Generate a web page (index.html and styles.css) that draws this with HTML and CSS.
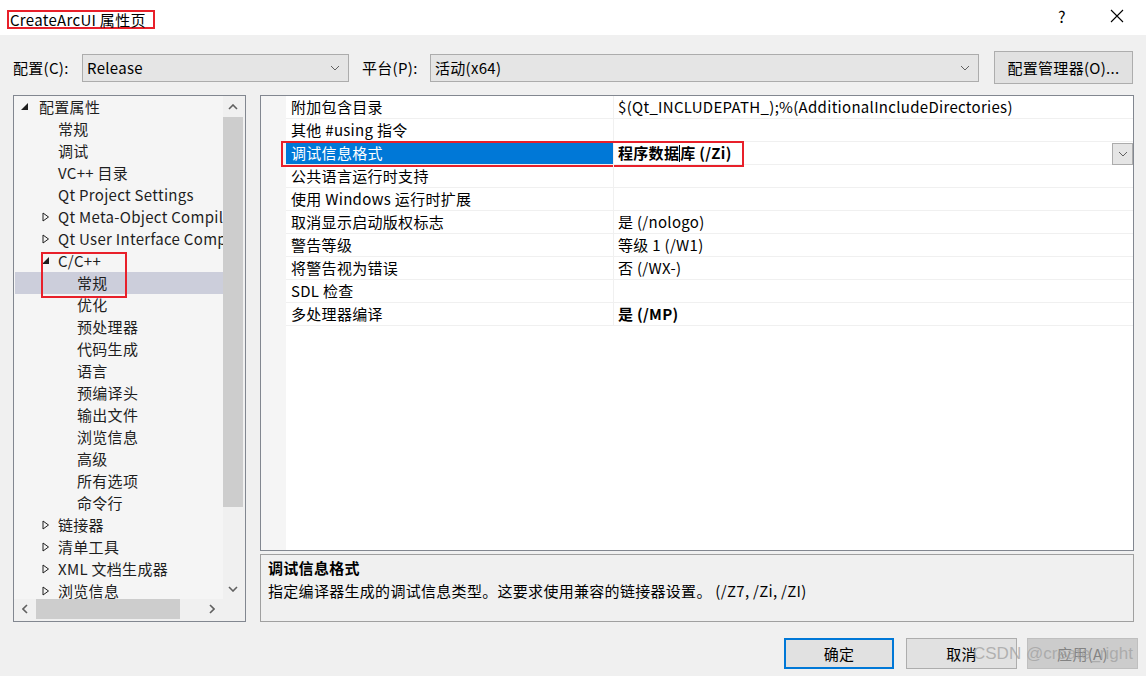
FILE: index.html
```html
<!DOCTYPE html>
<html lang="zh-CN">
<head>
    <meta charset="UTF-8">
    <title>CreateArcUI 属性页</title>
    <link rel="stylesheet" href="styles.css">
</head>
<body>
    <!-- Title bar -->
    <div class="titlebar">
        <span class="title-text mark">CreateArcUI 属性页</span>
        <div class="title-controls">
            <span class="help">?</span>
            <svg class="close" width="14" height="14" viewBox="0 0 14 14">
                <path d="M1 1 L13 13 M13 1 L1 13" stroke="#000" stroke-width="1.1" fill="none"/>
            </svg>
        </div>
    </div>

    <div class="dialog">
        <!-- Configuration row -->
        <div class="config-row">
            <label class="cfg-label">配置(C):</label>
            <div class="combo combo-config">
                <span>Release</span>
                <svg width="10" height="6" viewBox="0 0 10 6"><path d="M1 1 L5 5 L9 1" stroke="#606060" fill="none"/></svg>
            </div>
            <label class="cfg-label plat-label">平台(P):</label>
            <div class="combo combo-platform">
                <span>活动(x64)</span>
                <svg width="10" height="6" viewBox="0 0 10 6"><path d="M1 1 L5 5 L9 1" stroke="#606060" fill="none"/></svg>
            </div>
            <button class="btn btn-manager">配置管理器(O)...</button>
        </div>

        <div class="main">
            <!-- Tree -->
            <div class="tree">
                <div class="tree-content">
                    <div class="node lvl0"><span class="exp"><svg width="8" height="8" viewBox="0 0 8 8"><path d="M7 0 L7 7 L0 7 Z" fill="#1e1e1e"/></svg></span>配置属性</div>
                    <div class="node lvl1">常规</div>
                    <div class="node lvl1">调试</div>
                    <div class="node lvl1">VC++ 目录</div>
                    <div class="node lvl1">Qt Project Settings</div>
                    <div class="node lvl1"><span class="exp exp1"><svg width="8" height="10" viewBox="0 0 8 10"><path d="M1 1 L6.5 5 L1 9 Z" fill="none" stroke="#1e1e1e"/></svg></span>Qt Meta-Object Compiler</div>
                    <div class="node lvl1"><span class="exp exp1"><svg width="8" height="10" viewBox="0 0 8 10"><path d="M1 1 L6.5 5 L1 9 Z" fill="none" stroke="#1e1e1e"/></svg></span>Qt User Interface Compiler</div>
                    <div class="node lvl1"><span class="exp exp1"><svg width="8" height="8" viewBox="0 0 8 8"><path d="M7 0 L7 7 L0 7 Z" fill="#1e1e1e"/></svg></span>C/C++</div>
                    <div class="node lvl2 selected">常规</div>
                    <div class="node lvl2">优化</div>
                    <div class="node lvl2">预处理器</div>
                    <div class="node lvl2">代码生成</div>
                    <div class="node lvl2">语言</div>
                    <div class="node lvl2">预编译头</div>
                    <div class="node lvl2">输出文件</div>
                    <div class="node lvl2">浏览信息</div>
                    <div class="node lvl2">高级</div>
                    <div class="node lvl2">所有选项</div>
                    <div class="node lvl2">命令行</div>
                    <div class="node lvl1"><span class="exp exp1"><svg width="8" height="10" viewBox="0 0 8 10"><path d="M1 1 L6.5 5 L1 9 Z" fill="none" stroke="#1e1e1e"/></svg></span>链接器</div>
                    <div class="node lvl1"><span class="exp exp1"><svg width="8" height="10" viewBox="0 0 8 10"><path d="M1 1 L6.5 5 L1 9 Z" fill="none" stroke="#1e1e1e"/></svg></span>清单工具</div>
                    <div class="node lvl1"><span class="exp exp1"><svg width="8" height="10" viewBox="0 0 8 10"><path d="M1 1 L6.5 5 L1 9 Z" fill="none" stroke="#1e1e1e"/></svg></span>XML 文档生成器</div>
                    <div class="node lvl1"><span class="exp exp1"><svg width="8" height="10" viewBox="0 0 8 10"><path d="M1 1 L6.5 5 L1 9 Z" fill="none" stroke="#1e1e1e"/></svg></span>浏览信息</div>
                    <div class="tree-mark"></div>
                </div>
                <div class="vscroll">
                    <div class="arrow-box"><svg width="10" height="6" viewBox="0 0 10 6"><path d="M1 5 L5 1 L9 5" stroke="#606060" stroke-width="1.6" fill="none"/></svg></div>
                    <div class="vthumb"></div>
                    <div class="vtrack"></div>
                    <div class="arrow-box"><svg width="10" height="6" viewBox="0 0 10 6"><path d="M1 1 L5 5 L9 1" stroke="#606060" stroke-width="1.6" fill="none"/></svg></div>
                </div>
                <div class="hscroll">
                    <div class="arrow-box h"><svg width="6" height="10" viewBox="0 0 6 10"><path d="M5 1 L1 5 L5 9" stroke="#606060" stroke-width="1.6" fill="none"/></svg></div>
                    <div class="hthumb"></div>
                    <div class="htrack"></div>
                    <div class="arrow-box h"><svg width="6" height="10" viewBox="0 0 6 10"><path d="M1 1 L5 5 L1 9" stroke="#606060" stroke-width="1.6" fill="none"/></svg></div>
                </div>
                <div class="corner"></div>
            </div>

            <!-- Property grid and description -->
            <div class="right">
                <div class="grid">
                    <div class="gutter"></div>
                    <div class="rows">
                        <div class="row"><div class="name">附加包含目录</div><div class="value">$(Qt_INCLUDEPATH_);%(AdditionalIncludeDirectories)</div></div>
                        <div class="row"><div class="name">其他 #using 指令</div><div class="value"></div></div>
                        <div class="row active">
                            <div class="name">调试信息格式</div>
                            <div class="value bold">程序数据<span class="caret"></span>库 (/Zi)
                                <span class="drop"><svg width="10" height="6" viewBox="0 0 10 6"><path d="M1 1 L5 5 L9 1" stroke="#606060" fill="none"/></svg></span>
                            </div>
                            <div class="row-mark"></div>
                        </div>
                        <div class="row"><div class="name">公共语言运行时支持</div><div class="value"></div></div>
                        <div class="row"><div class="name">使用 Windows 运行时扩展</div><div class="value"></div></div>
                        <div class="row"><div class="name">取消显示启动版权标志</div><div class="value">是 (/nologo)</div></div>
                        <div class="row"><div class="name">警告等级</div><div class="value">等级 1 (/W1)</div></div>
                        <div class="row"><div class="name">将警告视为错误</div><div class="value">否 (/WX-)</div></div>
                        <div class="row"><div class="name">SDL 检查</div><div class="value"></div></div>
                        <div class="row"><div class="name">多处理器编译</div><div class="value bold">是 (/MP)</div></div>
                    </div>
                </div>
                <div class="desc">
                    <div class="desc-title">调试信息格式</div>
                    <div class="desc-text">指定编译器生成的调试信息类型。这要求使用兼容的链接器设置。 (/Z7, /Zi, /ZI)</div>
                </div>
            </div>
        </div>

        <!-- Buttons -->
        <div class="footer">
            <button class="btn btn-ok">确定</button>
            <button class="btn btn-cancel">取消</button>
            <button class="btn btn-apply" disabled>应用(A)</button>
            <span class="watermark">CSDN @create_right</span>
        </div>
    </div>
</body>
</html>
```

FILE: styles.css
```css
* {
    box-sizing: border-box;
}
body {
    margin: 0;
    width: 1146px;
    height: 676px;
    overflow: hidden;
    background-color: #f0f0f0;
    font-family: "Noto Sans CJK SC", "Noto Sans", sans-serif;
    font-size: 15px;
    letter-spacing: 0.3px;
    color: #000;
}
.titlebar {
    height: 35px;
    background-color: #fff;
    display: flex;
    align-items: flex-start;
    justify-content: space-between;
}
.title-text {
    margin: 10px 0 0 7px;
    height: 19px;
    line-height: 15px;
    padding: 0 7px 0 1px;
}
.mark {
    border: 2px solid #e8202a;
}
.title-controls {
    display: flex;
    align-items: center;
    gap: 44px;
    margin: 6px 22px 0 0;
}
.help {
    font-size: 16px;
    line-height: 20px;
}
.dialog {
    padding: 0 12px 0 13px;
}
.config-row {
    display: flex;
    align-items: center;
    height: 33px;
    margin-top: 16px;
}
.cfg-label {
    width: 69px;
}
.plat-label {
    width: 68px;
    margin-left: 13px;
}
.combo {
    height: 28px;
    background-color: #e5e5e5;
    border: 1px solid #acacac;
    display: flex;
    align-items: center;
    justify-content: space-between;
    padding: 0 8px 0 4px;
}
.combo-config {
    width: 267px;
}
.combo-platform {
    width: 549px;
}
.btn {
    font-family: inherit;
    font-size: 15px;
    letter-spacing: 0.3px;
    color: #000;
    background-color: #e1e1e1;
    border: 1px solid #adadad;
    padding: 0;
}
.btn-manager {
    width: 139px;
    height: 33px;
    margin-left: 15px;
}
.main {
    display: flex;
    gap: 14px;
    margin-top: 11px;
}
.tree {
    width: 233px;
    height: 527px;
    border: 1px solid #828790;
    background-color: #f0f0f0;
    display: grid;
    grid-template-columns: 209px 20px;
    grid-template-rows: 503px 20px;
    position: relative;
}
.tree-content {
    background-color: #f5f5f5;
    overflow: hidden;
    white-space: nowrap;
    color: #1e1e1e;
    position: relative;
}
.node {
    height: 22px;
    line-height: 22px;
    display: flex;
    align-items: center;
}
.lvl0 {
    padding-left: 25px;
}
.lvl1 {
    padding-left: 44px;
}
.lvl2 {
    padding-left: 63px;
}
.exp {
    flex-shrink: 0;
    width: 14px;
    margin-left: -17px;
    margin-right: 3px;
    display: flex;
    align-items: center;
    justify-content: flex-start;
}
.lvl0 .exp {
    margin-left: -18px;
    margin-right: 4px;
}
.exp1 {
    margin-left: -16px;
    margin-right: 2px;
}
.selected {
    background-color: #cccedb;
    margin-left: 1px;
    padding-left: 62px;
}
.tree-mark {
    position: absolute;
    left: 27px;
    top: 156px;
    width: 86px;
    height: 46px;
    border: 2px solid #e8202a;
}
.vscroll {
    display: flex;
    flex-direction: column;
    background-color: #f0f0f0;
}
.arrow-box {
    height: 21px;
    display: flex;
    align-items: center;
    justify-content: center;
}
.arrow-box.h {
    width: 22px;
    height: 20px;
}
.vthumb {
    height: 390px;
    background-color: #cdcdcd;
}
.vtrack {
    flex: 1;
}
.hscroll {
    display: flex;
    background-color: #f0f0f0;
}
.hthumb {
    width: 144px;
    background-color: #cdcdcd;
}
.htrack {
    flex: 1;
}
.right {
    width: 874px;
    display: flex;
    flex-direction: column;
    gap: 3px;
}
.grid {
    height: 456px;
    border: 1px solid #828790;
    background-color: #fff;
    display: flex;
}
.gutter {
    width: 25px;
    background-color: #f5f5f5;
}
.rows {
    flex: 1;
}
.row {
    height: 23px;
    display: flex;
    border-bottom: 1px solid #f0f0f0;
    position: relative;
}
.name {
    width: 327px;
    padding-left: 5px;
    line-height: 22px;
    white-space: nowrap;
}
.value {
    flex: 1;
    border-left: 1px solid #f0f0f0;
    padding-left: 4px;
    line-height: 22px;
    white-space: nowrap;
    display: flex;
    align-items: center;
}
.bold {
    font-weight: bold;
}
.active .name {
    background-color: #0078d7;
    color: #fff;
}
.caret {
    display: inline-block;
    width: 1px;
    height: 17px;
    background-color: #000;
}
.drop {
    margin-left: auto;
    width: 21px;
    height: 22px;
    margin-top: 1px;
    background-color: #e5e5e5;
    border: 1px solid #acacac;
    display: flex;
    align-items: center;
    justify-content: center;
}
.row-mark {
    position: absolute;
    left: -5px;
    top: -1px;
    width: 463px;
    height: 26px;
    border: 2px solid #e8202a;
}
.desc {
    height: 68px;
    border: 1px solid #a0a0a0;
    background-color: #f0f0f0;
    padding: 2px 7px;
}
.desc-title {
    font-weight: bold;
    line-height: 22px;
}
.desc-text {
    line-height: 23px;
}
.footer {
    display: flex;
    margin-top: 16px;
    padding-left: 771px;
    position: relative;
}
.btn-ok {
    width: 110px;
    height: 31px;
    border: 2px solid #0078d7;
}
.btn-cancel {
    width: 111px;
    height: 31px;
    margin-left: 12px;
}
.btn-apply {
    width: 111px;
    height: 31px;
    margin-left: 10px;
    margin-right: -4px;
    background-color: #cccccc;
    border-color: #bfbfbf;
    color: #838383;
}
.watermark {
    position: absolute;
    left: 960px;
    top: 6px;
    font-family: "Liberation Sans", sans-serif;
    font-size: 17px;
    letter-spacing: 0;
    color: rgba(160, 160, 160, 0.75);
    white-space: nowrap;
}
```
